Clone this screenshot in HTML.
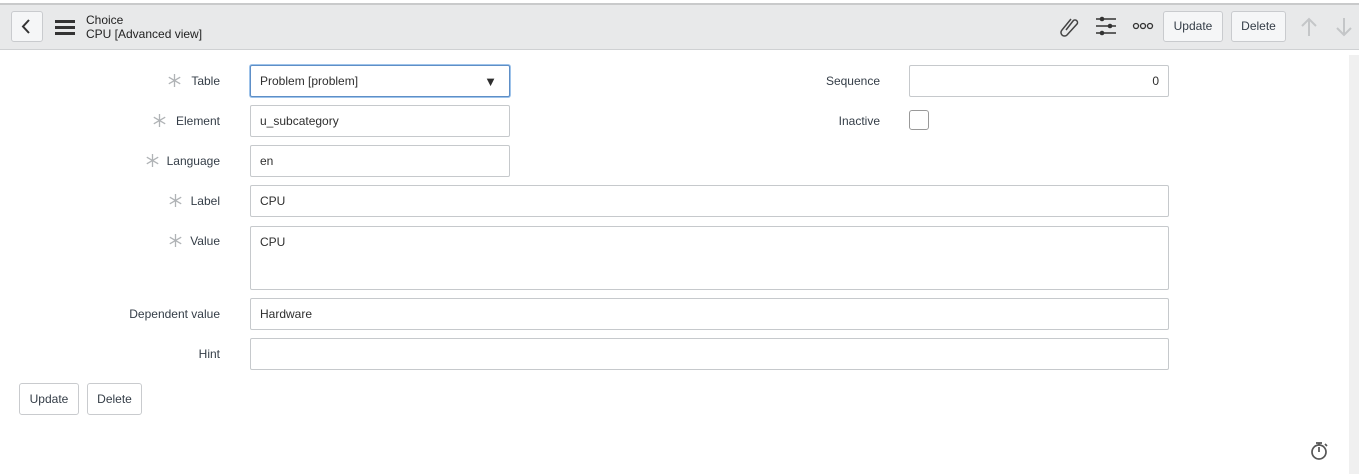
<!DOCTYPE html>
<html><head><style>
*{box-sizing:border-box;margin:0;padding:0}
body{width:1359px;height:474px;overflow:hidden;background:#fff;font-family:"Liberation Sans",sans-serif;font-size:12px;color:#343d47;position:relative}
.abs{position:absolute}
.bar{left:0;top:3px;width:1359px;height:47px;background:#e8e9ea;border-top:2px solid #c9cacb;border-bottom:1px solid #cfd1d3}
.btn{position:absolute;background:#f5f6f7;border:1px solid #c9cbce;border-radius:3px;font-size:12px;color:#343d47;text-align:center}
.lbl{position:absolute;text-align:right;font-size:12px;color:#343d47}
.inp{position:absolute;border:1px solid #c6c9cc;border-radius:2px;background:#fff;padding-left:9px;font-size:12px;line-height:30px;color:#2e2e2e}
.star{position:absolute;width:13px;height:13px}
</style></head><body>
<svg width="0" height="0" style="position:absolute"><defs><g id="st"><g stroke="#b0b3b6" stroke-width="1.3"><line x1="6.5" y1="0" x2="6.5" y2="13"/><line x1="0.8" y1="3.2" x2="12.2" y2="9.8"/><line x1="0.8" y1="9.8" x2="12.2" y2="3.2"/></g></g></defs></svg>
<div class="abs bar"></div>
<div class="btn" style="left:11px;top:11px;width:32px;height:31px"><svg width="30" height="29" viewBox="0 0 30 29"><path d="M17 8 L11 14.5 L17 21" stroke="#333" stroke-width="2" fill="none"/></svg></div>
<div class="abs" style="left:55px;top:20px;width:20px;height:3px;background:#333;box-shadow:0 6px 0 #333,0 12px 0 #333"></div>
<div class="abs" style="left:86px;top:13px;font-size:12px;line-height:14px;color:#222">Choice<br>CPU [Advanced view]</div>
<svg class="abs" style="left:1058px;top:15px" width="22" height="22" viewBox="0 0 22 22"><path d="M8 15 L15 6 a2.5 2.5 0 0 1 4 3 L9 20 a3.5 3.5 0 0 1 -5 -5 L13 4" stroke="#444" stroke-width="1.5" fill="none"/></svg>
<svg class="abs" style="left:1095px;top:16px" width="22" height="22" viewBox="0 0 22 22"><g stroke="#333" stroke-width="1.6"><line x1="1" y1="3" x2="21" y2="3"/><line x1="1" y1="10" x2="21" y2="10"/><line x1="1" y1="17" x2="21" y2="17"/></g><circle cx="7" cy="3" r="2.3" fill="#333"/><circle cx="15" cy="10" r="2.3" fill="#333"/><circle cx="7" cy="17" r="2.3" fill="#333"/></svg>
<svg class="abs" style="left:1132px;top:22px" width="22" height="8"><g fill="none" stroke="#333" stroke-width="1.3"><circle cx="4" cy="4" r="2.5"/><circle cx="11" cy="4" r="2.5"/><circle cx="18" cy="4" r="2.5"/></g></svg>
<div class="btn" style="left:1163px;top:11px;width:60px;height:31px;line-height:29px">Update</div>
<div class="btn" style="left:1231px;top:11px;width:55px;height:31px;line-height:29px">Delete</div>
<svg class="abs" style="left:1299px;top:16px" width="20" height="22"><path d="M10 20 V3 M3 10 L10 3 L17 10" stroke="#c4c6c8" stroke-width="2" fill="none"/></svg>
<svg class="abs" style="left:1334px;top:16px" width="20" height="22"><path d="M10 2 V19 M3 12 L10 19 L17 12" stroke="#c4c6c8" stroke-width="2" fill="none"/></svg>
<div class="abs" style="left:1349px;top:55px;width:10px;height:419px;background:#f0f0f0"></div>

<svg class="star" style="left:168px;top:74px"><use href="#st"/></svg><div class="lbl" style="left:150px;top:74px;width:70px">Table</div>
<div class="inp" style="left:250px;top:65px;width:260px;height:32px;border-color:#5e8fc7;box-shadow:0 0 0 1px #9ec3ea">Problem [problem]<span style="position:absolute;right:12px;top:1px;font-size:13px">▼</span></div>
<svg class="star" style="left:153px;top:114px"><use href="#st"/></svg><div class="lbl" style="left:150px;top:114px;width:70px">Element</div>
<div class="inp" style="left:250px;top:105px;width:260px;height:32px">u_subcategory</div>
<svg class="star" style="left:146px;top:154px"><use href="#st"/></svg><div class="lbl" style="left:150px;top:154px;width:70px">Language</div>
<div class="inp" style="left:250px;top:145px;width:260px;height:32px">en</div>
<svg class="star" style="left:169px;top:194px"><use href="#st"/></svg><div class="lbl" style="left:150px;top:194px;width:70px">Label</div>
<div class="inp" style="left:250px;top:185px;width:919px;height:32px">CPU</div>
<svg class="star" style="left:169px;top:234px"><use href="#st"/></svg><div class="lbl" style="left:150px;top:234px;width:70px">Value</div>
<div class="inp" style="left:250px;top:226px;width:919px;height:64px">CPU</div>
<div class="lbl" style="left:100px;top:307px;width:120px">Dependent value</div>
<div class="inp" style="left:250px;top:298px;width:919px;height:32px">Hardware</div>
<div class="lbl" style="left:150px;top:347px;width:70px">Hint</div>
<div class="inp" style="left:250px;top:338px;width:919px;height:32px"></div>
<div class="lbl" style="left:760px;top:74px;width:120px">Sequence</div>
<div class="inp" style="left:909px;top:65px;width:260px;height:32px;text-align:right;padding-right:9px">0</div>
<div class="lbl" style="left:760px;top:114px;width:120px">Inactive</div>
<div class="abs" style="left:909px;top:110px;width:20px;height:20px;border:1px solid #999;border-radius:3px"></div>
<div class="btn" style="left:19px;top:383px;width:60px;height:32px;line-height:30px;background:#fff">Update</div>
<div class="btn" style="left:87px;top:383px;width:55px;height:32px;line-height:30px;background:#fff">Delete</div>
<svg class="abs" style="left:1309px;top:440px" width="22" height="22"><circle cx="10" cy="12" r="7" fill="none" stroke="#555" stroke-width="1.7"/><path d="M10 12 V7 M7 3 H13 M10 3 V5 M16 4 L18 6" stroke="#555" stroke-width="1.7"/></svg>
</body></html>
